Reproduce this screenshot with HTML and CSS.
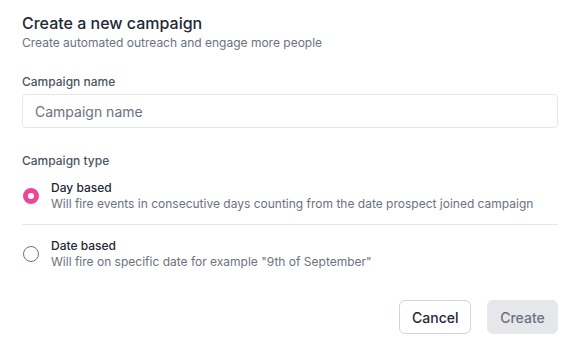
FILE: index.html
```html
<!DOCTYPE html>
<html>
<head>
<meta charset="utf-8">
<link rel="stylesheet" href="styles.css">
</head>
<body>
<div class="dialog">
  <div class="header">
    <h1 class="title">Create a new campaign</h1>
    <p class="subtitle">Create automated outreach and engage more people</p>
  </div>
  <div class="field">
    <label class="label">Campaign name</label>
    <input class="input" type="text" placeholder="Campaign name">
  </div>
  <div class="field type-field">
    <div class="label">Campaign type</div>
    <div class="options">
      <div class="option">
        <span class="radio checked"></span>
        <div class="opt-text">
          <div class="opt-title">Day based</div>
          <div class="opt-desc">Will fire events in consecutive days counting from the date prospect joined campaign</div>
        </div>
      </div>
      <div class="divider"></div>
      <div class="option">
        <span class="radio"></span>
        <div class="opt-text">
          <div class="opt-title">Date based</div>
          <div class="opt-desc">Will fire on specific date for example "9th of September"</div>
        </div>
      </div>
    </div>
  </div>
  <div class="actions">
    <button class="btn btn-cancel">Cancel</button>
    <button class="btn btn-create">Create</button>
  </div>
</div>
</body>
</html>
```
FILE: styles.css
```css
* { box-sizing: border-box; }
html, body { margin: 0; padding: 0; background: #fff; }
body { font-family: Inter, "Noto Sans", sans-serif; color: #111827; }
.dialog { padding: 12px 27px 0 22px; display: flex; flex-direction: column; }
.title { margin: 0; font-size: 16px; line-height: 22px; font-weight: 500; color: #1f2937; }
.subtitle { margin: 1px 0 0; font-size: 12px; line-height: 16px; color: #6b7280; }
.field { margin-top: 23px; display: flex; flex-direction: column; }
.label { font-size: 12px; line-height: 16px; font-weight: 500; color: #4b5563; }
.input { margin-top: 4px; height: 34px; border: 1px solid #e5e7eb; border-radius: 4px; padding: 0 12px; font-family: Inter, sans-serif; font-size: 14px; color: #111827; outline: none; }
.input::placeholder { color: #6b7280; }
.type-field { margin-top: 25px; }
.options { margin-top: 11px; display: flex; flex-direction: column; }
.option { display: flex; align-items: center; gap: 12px; padding-left: 1px; }
.radio { width: 16px; height: 16px; border-radius: 50%; border: 1px solid #6b7280; flex: none; }
.radio.checked { border: 5px solid #ec4899; background: #fff; }
.opt-text { display: flex; flex-direction: column; }
.opt-title { font-size: 12px; line-height: 16px; font-weight: 500; color: #1f2937; }
.opt-desc { font-size: 12px; line-height: 16px; color: #6b7280; }
.divider { height: 1px; background: #e5e7eb; margin: 12px 0 13px; }
.actions { margin-top: 30px; display: flex; justify-content: flex-end; gap: 16px; }
.btn { height: 34px; border-radius: 6px; font-family: Inter, sans-serif; font-size: 14px; font-weight: 500; padding: 0 12px; }
.btn-cancel { background: #fff; border: 1px solid #d1d5db; color: #1f2937; width: 72px; }
.btn-create { background: #e5e7eb; border: 1px solid #e5e7eb; color: #6b7280; width: 71px; }
```
